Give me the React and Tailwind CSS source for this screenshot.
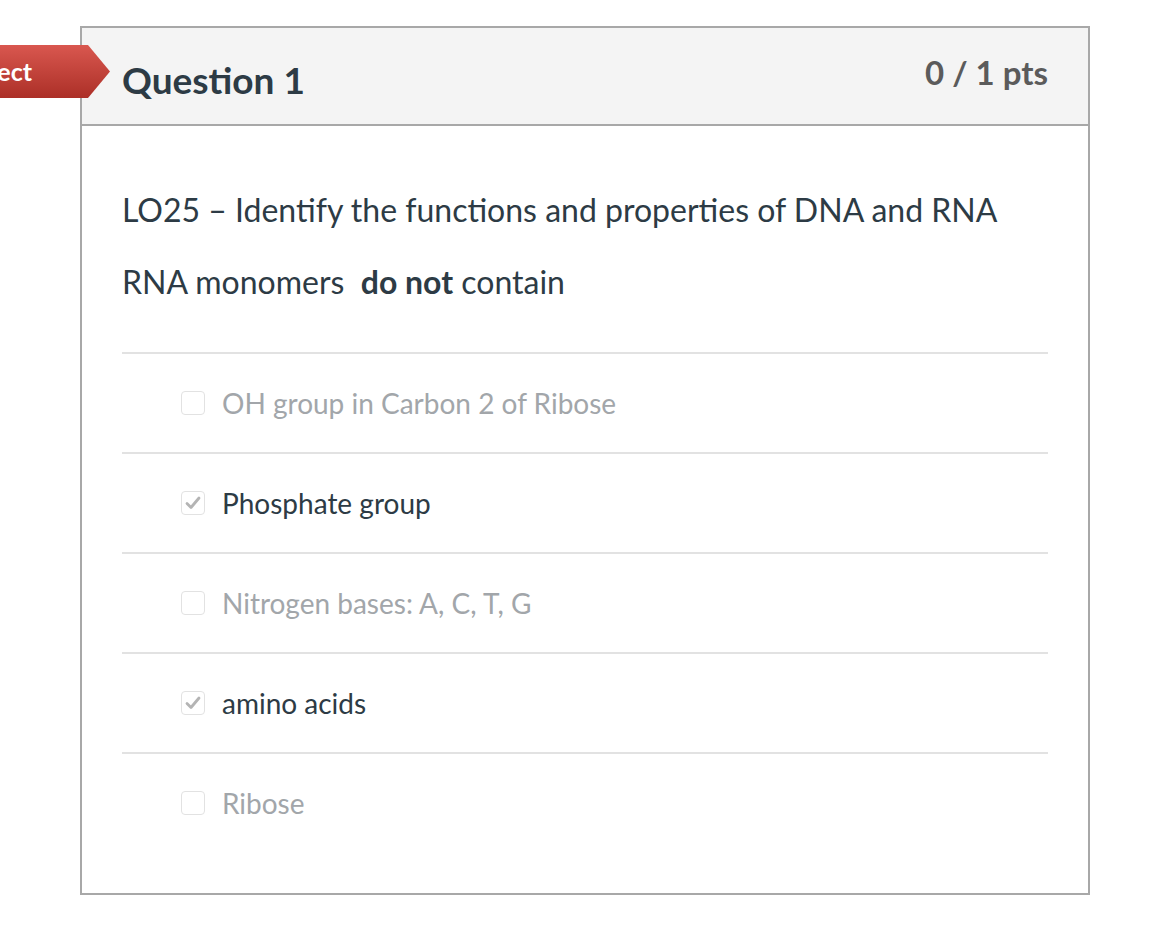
import React from 'react'

const answers = [
  { text: 'OH group in Carbon 2 of Ribose', checked: false },
  { text: 'Phosphate group', checked: true },
  { text: 'Nitrogen bases: A, C, T, G', checked: false },
  { text: 'amino acids', checked: true },
  { text: 'Ribose', checked: false },
]

function Checkbox({ checked }) {
  return (
    <div className="w-[24px] h-[24px] rounded-[4px] border border-[#e2e2e2] bg-white flex items-center justify-center shrink-0">
      {checked && (
        <svg width="18" height="18" viewBox="0 0 18 18" fill="none">
          <path d="M3 9.5 L7 13.5 L15 4" stroke="#b4b4b4" strokeWidth="2.8" strokeLinecap="round" strokeLinejoin="round" />
        </svg>
      )}
    </div>
  )
}

export default function App() {
  return (
    <div
      className="relative w-[1164px] h-[928px] bg-white pt-[26px] pl-[80px] overflow-hidden"
      style={{ fontFamily: 'Lato, "Open Sans", sans-serif' }}
    >
      {/* Incorrect badge */}
      <div className="absolute left-0 top-[45px] w-[110px] h-[53px] bg-gradient-to-b from-[#d9574f] to-[#ac2f27] [clip-path:polygon(0_0,88px_0,110px_50%,88px_100%,0_100%)] z-10">
        <div className="absolute right-[78px] top-0 h-[53px] flex items-center text-white text-[25px] font-bold whitespace-nowrap">
          Incorrect
        </div>
      </div>

      <div className="w-[1010px] border-2 border-[#a8a8a8] bg-white">
        {/* header */}
        <div className="h-[98px] bg-[#f4f4f4] border-b-2 border-[#a8a8a8] flex justify-between items-start px-[40px] pt-[26px]">
          <h2 className="mt-[6px] text-[37px] leading-[40px] font-bold text-[#2d3b45]">Question 1</h2>
          <div className="text-[33px] leading-[36px] font-bold text-[#5b5b5b]">0 / 1 pts</div>
        </div>

        {/* body */}
        <div className="px-[40px] pt-[62px] pb-[41px]">
          <p className="text-[32px] leading-[44px] text-[#2d3b45]">
            LO25 – Identify the functions and properties of DNA and RNA
          </p>
          <p className="mt-[28px] text-[32px] leading-[44px] text-[#2d3b45]">
            RNA monomers&nbsp; <strong className="font-bold">do not</strong> contain
          </p>

          <div className="mt-[48px]">
            {answers.map((a) => (
              <div
                key={a.text}
                className="h-[100px] border-t-2 border-[#e2e2e2] flex items-center pl-[59px] gap-[17px]"
              >
                <Checkbox checked={a.checked} />
                <span className={`text-[28px] ${a.checked ? 'text-[#2d3b45]' : 'text-[#a2a6aa]'}`}>{a.text}</span>
              </div>
            ))}
          </div>
        </div>
      </div>
    </div>
  )
}
